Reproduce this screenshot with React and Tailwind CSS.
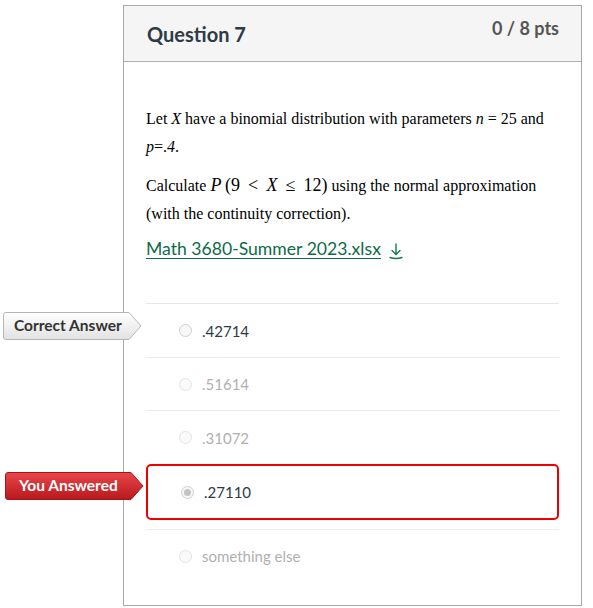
import React from "react";

function Radio({ checked, dim }) {
  return (
    <span
      className={`inline-flex h-[13px] w-[13px] items-center justify-center rounded-full border ${
        dim ? "border-[#e3e3e3] bg-[#fafafa]" : "border-[#cfcfcf] bg-[#f7f7f7]"
      }`}
    >
      {checked && <span className="h-[7px] w-[7px] rounded-full bg-[#c4c4c4]" />}
    </span>
  );
}

function Label({ text, red }) {
  return (
    <div className="relative h-[28px] w-[139px]">
      <svg className="absolute inset-0" width="139" height="28" viewBox="0 0 139 28">
        <defs>
          <linearGradient id={red ? "gr" : "gg"} x1="0" y1="0" x2="0" y2="1">
            {red ? (
              <>
                <stop offset="0" stopColor="#e8464a" />
                <stop offset="1" stopColor="#b8191c" />
              </>
            ) : (
              <>
                <stop offset="0" stopColor="#ffffff" />
                <stop offset="1" stopColor="#e2e2e2" />
              </>
            )}
          </linearGradient>
        </defs>
        <path
          d="M3 0.5 H126 L138 14 L126 27.5 H3 Q0.5 27.5 0.5 25 V3 Q0.5 0.5 3 0.5 Z"
          fill={`url(#${red ? "gr" : "gg"})`}
          stroke={red ? "#a51518" : "#b5b5b5"}
          strokeWidth="1"
        />
      </svg>
      <span
        className={`relative flex h-full items-center text-[15.5px] font-bold ${
          red ? "pl-[14px] text-white" : "pl-[11px] text-[#333]"
        }`}
      >
        {text}
      </span>
    </div>
  );
}

export default function App() {
  const lato = { fontFamily: "Lato, 'Open Sans', sans-serif" };
  return (
    <div className="relative h-[608px] w-[593px] bg-white pt-[5px]" style={lato}>
      <div className="absolute left-[3px] top-[312px] z-10">
        <Label text="Correct Answer" />
      </div>
      <div className="absolute left-[5px] top-[472px] z-10">
        <Label text="You Answered" red />
      </div>
      <div className="ml-[123px] h-[601px] w-[459px] border border-[#a8a8a8]">
        <div className="flex h-[56px] items-start justify-between border-b border-[#b0b0b0] bg-[#f5f5f5] pl-[23px] pr-[22px]">
          <div className="pt-[13px] text-[20px] font-bold text-[#2d3b45]">Question 7</div>
          <div className="pt-[9px] text-[18px] font-bold text-[#555]">0 / 8 pts</div>
        </div>
        <div className="px-[22px] pt-[43px]">
          <div
            className="text-[16px] leading-[28px] text-black"
            style={{ fontFamily: "'Liberation Serif', 'Times New Roman', serif" }}
          >
            <p>
              Let <i>X</i> have a binomial distribution with parameters <i>n</i> = 25 and
              <br />
              <i>p</i>=.<i>4</i>.
            </p>
            <p className="mt-[10px]">
              Calculate{" "}
              <span className="text-[18px]">
                <i>P</i>&thinsp;(9&thinsp; &lt; &thinsp;<i>X</i>&thinsp; ≤ &thinsp;12)
              </span>{" "}
              using the normal approximation
              <br />
              (with the continuity correction).
            </p>
          </div>
          <div className="mt-[8px] flex items-center gap-[7px] text-[17.6px] text-[#0d6b47]" style={lato}>
            <span className="underline decoration-1 underline-offset-[3px]">Math 3680-Summer 2023.xlsx</span>
            <svg width="16" height="18" viewBox="0 0 16 18" fill="none" stroke="#0d7a4a" strokeWidth="1.4" strokeLinecap="round" strokeLinejoin="round" className="mt-[3px]">
              <path d="M8 2 V12" />
              <path d="M4 8.5 L8 12.5 L12 8.5" />
              <path d="M2 15.5 Q8 17.5 14 15.5" />
            </svg>
          </div>

          <div className="mt-[41px] border-t border-[#e6e6e6]">
            <div className="flex h-[54px] items-center gap-[10px] border-b border-[#ececec] pl-[33px] text-[15px] text-[#2d3b45]">
              <Radio />
              <span>.42714</span>
            </div>
            <div className="flex h-[53px] items-center gap-[10px] border-b border-[#ececec] pl-[33px] text-[15px] text-[#b0b0b0]">
              <Radio dim />
              <span>.51614</span>
            </div>
            <div className="flex h-[53px] items-center gap-[10px] pl-[33px] text-[15px] text-[#b0b0b0]">
              <Radio dim />
              <span>.31072</span>
            </div>
            <div className="flex h-[56px] items-center gap-[10px] rounded-[5px] border-2 border-[#ee0000] pl-[33px] text-[15px] text-[#2d3b45]">
              <Radio checked />
              <span>.27110</span>
            </div>
            <div className="mt-[9px] flex h-[53px] items-center gap-[10px] border-t border-[#ececec] pl-[33px] text-[15px] text-[#b0b0b0]">
              <Radio dim />
              <span>something else</span>
            </div>
          </div>
        </div>
      </div>
    </div>
  );
}
